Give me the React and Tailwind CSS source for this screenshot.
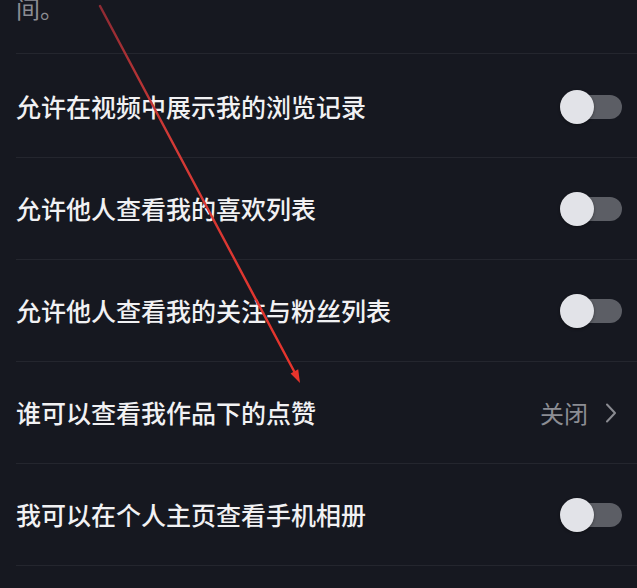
import React from 'react';

const rows = [
  { label: '允许在视频中展示我的浏览记录', type: 'toggle' },
  { label: '允许他人查看我的喜欢列表', type: 'toggle' },
  { label: '允许他人查看我的关注与粉丝列表', type: 'toggle' },
  { label: '谁可以查看我作品下的点赞', type: 'link', value: '关闭' },
  { label: '我可以在个人主页查看手机相册', type: 'toggle' },
];

function Toggle() {
  return (
    <div className="relative flex h-[34px] w-[62px] items-center">
      <div className="ml-[2px] h-[24px] w-[60px] rounded-full bg-[#5c5e65]" />
      <div className="absolute left-0 top-0 h-[34px] w-[34px] rounded-full bg-[#e2e3e8] shadow-[0_1px_3px_rgba(0,0,0,0.4)]" />
    </div>
  );
}

function Chevron() {
  return (
    <svg width="12" height="20" viewBox="0 0 12 20" fill="none">
      <path d="M2 1.5 L10 10 L2 18.5" stroke="#8a8b91" strokeWidth="2" strokeLinecap="round" strokeLinejoin="round" />
    </svg>
  );
}

function Row({ row, first }) {
  return (
    <div
      className={`flex items-center justify-between border-b border-[#24262e] pr-[15px] ${
        first ? 'h-[104px] pt-[2px]' : 'h-[102px]'
      }`}
    >
      <span className="text-[25px] font-medium leading-none text-[#f1f1f3]">{row.label}</span>
      {row.type === 'toggle' ? (
        <Toggle />
      ) : (
        <div className="flex items-center gap-[17px] pr-[5px]">
          <span className="text-[24px] leading-none text-[#8c8d93]">{row.value}</span>
          <Chevron />
        </div>
      )}
    </div>
  );
}

export default function App() {
  return (
    <div
      className="relative h-[588px] w-[637px] overflow-hidden bg-[#161820]"
      style={{ fontFamily: '"Noto Sans CJK SC", "Noto Sans", sans-serif' }}
    >
      <div className="ml-[16px]">
        <div className="h-[54px] overflow-hidden border-b border-[#24262e]">
          <p className="-mt-[9px] text-[24px] leading-[34px] text-[#8c8d93]">间。</p>
        </div>
        {rows.map((r, i) => (
          <Row key={r.label} row={r} first={i === 0} />
        ))}
      </div>

      {/* red annotation arrow drawn over the screenshot */}
      <svg className="pointer-events-none absolute left-0 top-0" width="637" height="588" viewBox="0 0 637 588">
        <defs>
          <linearGradient id="arrowGrad" x1="100" y1="6" x2="299" y2="382" gradientUnits="userSpaceOnUse">
            <stop offset="0" stopColor="#8e2a33" />
            <stop offset="0.35" stopColor="#d23a36" />
            <stop offset="1" stopColor="#e8342c" />
          </linearGradient>
        </defs>
        <line x1="100" y1="6" x2="295" y2="373" stroke="url(#arrowGrad)" strokeWidth="2.4" strokeLinecap="round" />
        <polygon points="300,383 298.2,369.2 290.6,373.4" fill="#e8342c" />
      </svg>
    </div>
  );
}
